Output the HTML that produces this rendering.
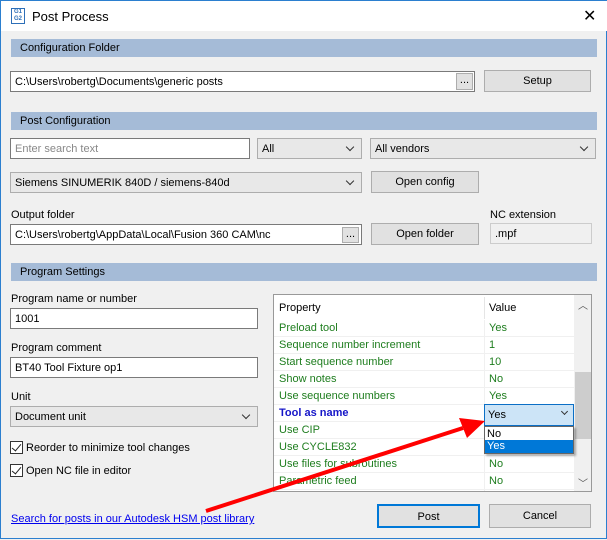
<!DOCTYPE html><html><head><style>
*{box-sizing:border-box;margin:0;padding:0}
body{width:607px;height:539px;background:#f0f0f0;font-family:"Liberation Sans",sans-serif;font-size:11px;color:#000;position:relative;overflow:hidden;border:1px solid #2b7fcf}
.a{position:absolute}
.hdr{position:absolute;left:10px;width:586px;height:18px;background:#a5bbd7;padding:3px 0 0 9px}
.in{position:absolute;background:#fff;border:1px solid #7a7a7a;height:21px;padding:4px 4px;white-space:nowrap;overflow:hidden}
.btn{position:absolute;background:#e1e1e1;border:1px solid #adadad;height:22px;text-align:center;padding-top:4px}
.sel{position:absolute;background:#e8e8e8;border:1px solid #adadad;height:21px;padding:4px 4px}
.sel:after{content:"";position:absolute;right:8px;top:5px;width:5px;height:5px;border-right:1px solid #333;border-bottom:1px solid #333;transform:rotate(45deg)}
.lbl{position:absolute}
.row{position:absolute;left:0;width:300px;height:17px;border-bottom:1px solid #f0f0f0;color:#1e7d1e}
.row span{position:absolute;top:2px}
.cb{position:absolute;width:13px;height:13px;border:1px solid #333;background:#fff}
.cb:after{content:"";position:absolute;left:3px;top:0;width:4px;height:8px;border-right:1.5px solid #222;border-bottom:1.5px solid #222;transform:rotate(40deg)}
</style></head><body>
<div class="a" style="left:0;top:0;width:607px;height:30px;background:#fff"></div>
<div class="a" style="left:10px;top:7px;width:14px;height:16px;border:1px solid #2d6fb8;font-size:6px;color:#2d6fb8;line-height:7px;text-align:center;font-weight:bold">G1<br>G2</div>
<div class="lbl" style="left:31px;top:8px;font-size:13px">Post Process</div>
<div class="lbl" style="left:582px;top:5px;font-size:16px">✕</div>

<div class="hdr" style="top:38px">Configuration Folder</div>
<div class="in" style="left:9px;top:70px;width:465px">C:\Users\robertg\Documents\generic posts</div>
<div class="btn" style="left:455px;top:72px;width:17px;height:17px;padding-top:0;font-size:11px">...</div>
<div class="btn" style="left:483px;top:69px;width:107px">Setup</div>

<div class="hdr" style="top:111px">Post Configuration</div>
<div class="in" style="left:9px;top:137px;width:240px;color:#888">Enter search text</div>
<div class="sel" style="left:256px;top:137px;width:105px">All</div>
<div class="sel" style="left:369px;top:137px;width:226px">All vendors</div>
<div class="sel" style="left:9px;top:171px;width:352px">Siemens SINUMERIK 840D / siemens-840d</div>
<div class="btn" style="left:370px;top:170px;width:108px">Open config</div>
<div class="lbl" style="left:10px;top:208px">Output folder</div>
<div class="in" style="left:9px;top:223px;width:352px">C:\Users\robertg\AppData\Local\Fusion 360 CAM\nc</div>
<div class="btn" style="left:341px;top:226px;width:17px;height:16px;padding-top:0;font-size:11px">...</div>
<div class="btn" style="left:370px;top:222px;width:108px">Open folder</div>
<div class="lbl" style="left:489px;top:208px">NC extension</div>
<div class="in" style="left:489px;top:222px;width:102px;background:#f0f0f0;border-color:#ccc">.mpf</div>

<div class="hdr" style="top:262px">Program Settings</div>
<div class="lbl" style="left:10px;top:292px">Program name or number</div>
<div class="in" style="left:9px;top:307px;width:248px">1001</div>
<div class="lbl" style="left:10px;top:341px">Program comment</div>
<div class="in" style="left:9px;top:356px;width:248px">BT40 Tool Fixture op1</div>
<div class="lbl" style="left:10px;top:390px">Unit</div>
<div class="sel" style="left:9px;top:405px;width:248px">Document unit</div>
<div class="cb" style="left:9px;top:440px"></div><div class="lbl" style="left:25px;top:441px">Reorder to minimize tool changes</div>
<div class="cb" style="left:9px;top:463px"></div><div class="lbl" style="left:25px;top:464px">Open NC file in editor</div>

<div class="a" style="left:272px;top:293px;width:319px;height:198px;background:#fff;border:1px solid #999;overflow:hidden">
<div class="lbl" style="left:5px;top:7px">Property</div><div class="lbl" style="left:215px;top:7px">Value</div>
<div class="a" style="left:210px;top:2px;width:1px;height:22px;background:#e5e5e5"></div>
<div class="a" style="left:300px;top:0;width:18px;height:196px;background:#f0f0f0"></div>
<div class="a" style="left:301px;top:77px;width:16px;height:67px;background:#cdcdcd"></div>
<div class="lbl" style="left:304px;top:2px;font-size:10px;color:#555">︿</div>
<div class="lbl" style="left:304px;top:180px;font-size:10px;color:#555">﹀</div>
<div class="a" style="left:210px;top:25px;width:1px;height:172px;background:#f0f0f0"></div>
<div class="row" style="top:25px"><span style="left:5px">Preload tool</span><span style="left:215px">Yes</span></div>
<div class="row" style="top:42px"><span style="left:5px">Sequence number increment</span><span style="left:215px">1</span></div>
<div class="row" style="top:59px"><span style="left:5px">Start sequence number</span><span style="left:215px">10</span></div>
<div class="row" style="top:76px"><span style="left:5px">Show notes</span><span style="left:215px">No</span></div>
<div class="row" style="top:93px"><span style="left:5px">Use sequence numbers</span><span style="left:215px">Yes</span></div>
<div class="row" style="top:110px;color:#1515c8;font-weight:bold"><span style="left:5px">Tool as name</span></div>
<div class="row" style="top:127px"><span style="left:5px">Use CIP</span></div>
<div class="row" style="top:144px"><span style="left:5px">Use CYCLE832</span></div>
<div class="row" style="top:161px"><span style="left:5px">Use files for subroutines</span><span style="left:215px">No</span></div>
<div class="row" style="top:178px"><span style="left:5px">Parametric feed</span><span style="left:215px">No</span></div>
</div>
<div class="a" style="left:483px;top:403px;width:90px;height:22px;background:#cce4f7;border:1px solid #0b6fc6;padding:4px 3px">Yes<span style="position:absolute;right:6px;top:4px;width:5px;height:5px;border-right:1px solid #333;border-bottom:1px solid #333;transform:rotate(45deg)"></span></div>
<div class="a" style="left:483px;top:425px;width:90px;height:28px;background:#fff;border:1px solid #666;box-shadow:2px 2px 2px rgba(0,0,0,.3)">
<div style="padding:1px 2px;height:13px">No</div><div style="background:#0078d7;color:#fff;padding:0 2px;height:13px">Yes</div></div>

<div class="lbl" style="left:10px;top:512px;color:#0000ee;text-decoration:underline">Search for posts in our Autodesk HSM post library</div>
<div class="btn" style="left:376px;top:503px;width:103px;height:24px;border:2px solid #0078d7;padding-top:5px">Post</div>
<div class="btn" style="left:488px;top:503px;width:102px;height:24px;padding-top:5px">Cancel</div>

<svg class="a" style="left:0;top:0" width="607" height="539"><line x1="205" y1="510" x2="462" y2="427" stroke="#f00" stroke-width="4"/><polygon points="484,420 458,417 466,437" fill="#f00"/></svg>
</body></html>
